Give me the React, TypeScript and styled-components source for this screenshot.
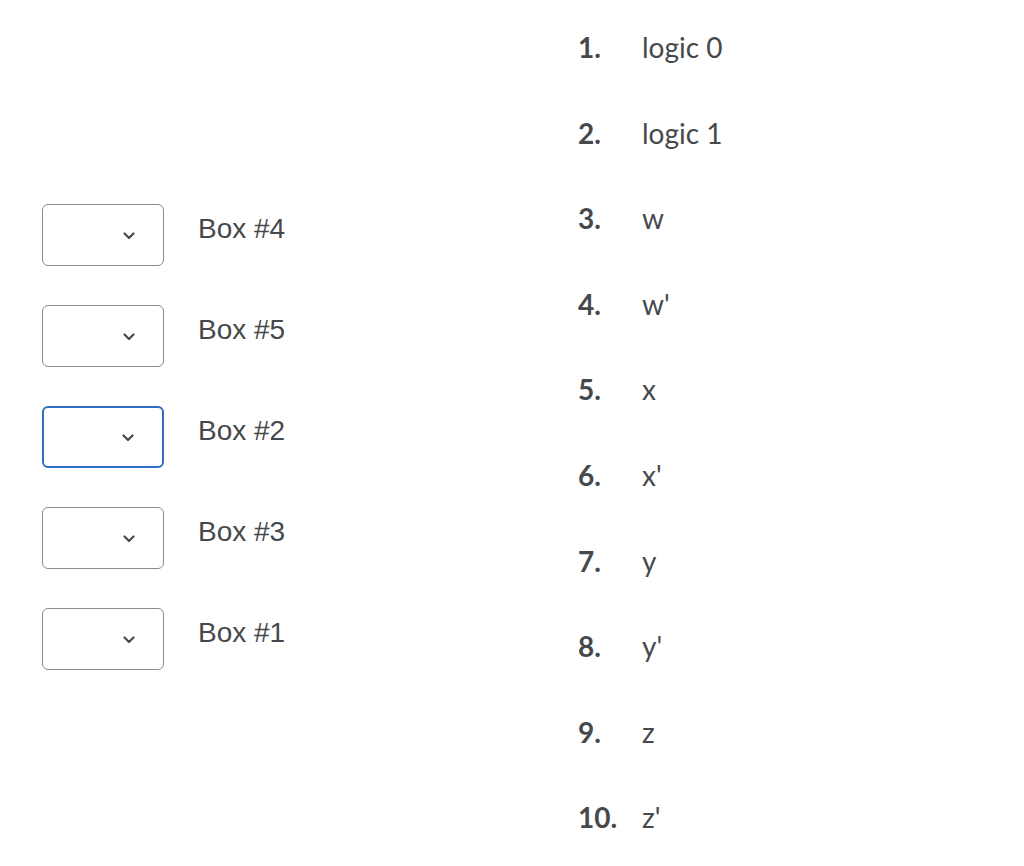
import styled, { createGlobalStyle } from 'styled-components';

const GlobalStyle = createGlobalStyle`
  body {
    margin: 0;
    background: #ffffff;
    color: #494c4e;
  }
`;

const BOXES = [
  { label: 'Box #4', focused: false },
  { label: 'Box #5', focused: false },
  { label: 'Box #2', focused: true },
  { label: 'Box #3', focused: false },
  { label: 'Box #1', focused: false },
];

const CHOICES = ['logic 0', 'logic 1', 'w', "w'", 'x', "x'", 'y', "y'", 'z', "z'"];

function Chevron() {
  return (
    <svg width="12" height="8" viewBox="0 0 12 8" aria-hidden="true">
      <path
        d="M1.5 1.5 L6 6 L10.5 1.5"
        fill="none"
        stroke="#494c4e"
        strokeWidth="2.2"
        strokeLinecap="round"
        strokeLinejoin="round"
      />
    </svg>
  );
}

function App() {
  return (
    <Page>
      <GlobalStyle />
      <MatchColumn>
        {BOXES.map((box) => (
          <MatchRow key={box.label}>
            <SelectBox $focused={box.focused}>
              <Chevron />
            </SelectBox>
            <BoxLabel>{box.label}</BoxLabel>
          </MatchRow>
        ))}
      </MatchColumn>
      <ChoiceList>
        {CHOICES.map((choice, i) => (
          <ChoiceItem key={choice}>
            <ChoiceNumber>{i + 1}.</ChoiceNumber>
            <ChoiceText>{choice}</ChoiceText>
          </ChoiceItem>
        ))}
      </ChoiceList>
    </Page>
  );
}

const Page = styled.div`
  display: flex;
  align-items: flex-start;
  width: 1024px;
  height: 866px;
  padding: 32px 0 0 42px;
  box-sizing: border-box;
`;

const MatchColumn = styled.div`
  display: flex;
  flex-direction: column;
  gap: 39px;
  width: 536px;
  margin-top: 172px;
`;

const MatchRow = styled.div`
  display: flex;
  align-items: flex-start;
  gap: 34px;
`;

const SelectBox = styled.div<{ $focused: boolean }>`
  box-sizing: border-box;
  width: 122px;
  height: 62px;
  display: flex;
  align-items: center;
  justify-content: flex-end;
  padding: 2px 28px 0 0;
  border-radius: 6px;
  background: #ffffff;
  border: ${({ $focused }) => ($focused ? '2px solid #2e6dbf' : '1px solid #8a8c8e')};
`;

const BoxLabel = styled.span`
  font-family: 'Liberation Sans', Arial, sans-serif;
  font-size: 28px;
  line-height: 30px;
  padding-top: 10px;
  color: #46494b;
`;

const ChoiceList = styled.ol`
  list-style: none;
  margin: 0;
  padding: 0;
  display: flex;
  flex-direction: column;
  font-family: Lato, 'Open Sans', sans-serif;
  font-size: 28px;
  color: #46494b;
`;

const ChoiceItem = styled.li`
  display: flex;
  align-items: baseline;
  height: 85.6px;
  line-height: 30px;
`;

const ChoiceNumber = styled.span`
  width: 64px;
  font-weight: 700;
`;

const ChoiceText = styled.span`
  font-weight: 400;
`;

export default App;
